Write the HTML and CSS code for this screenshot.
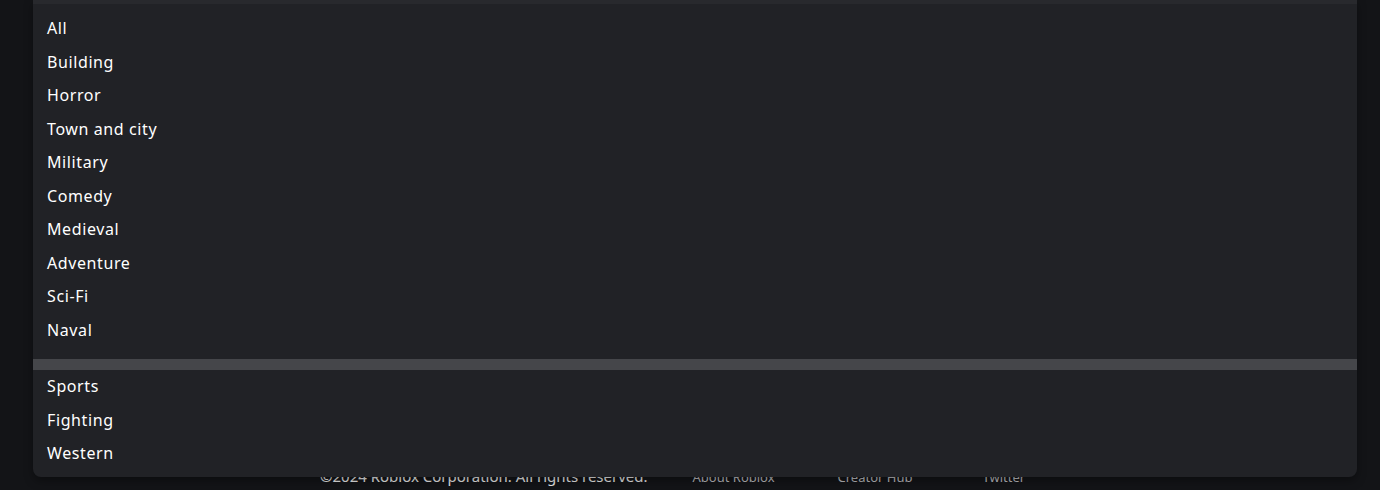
FILE: index.html
```html
<!DOCTYPE html>
<html lang="en">
<head>
    <meta charset="UTF-8">
    <meta name="viewport" content="width=device-width, initial-scale=1.0">
    <title>Genre filter</title>
    <link rel="stylesheet" href="styles.css">
</head>
<body>
    <div class="page">
        <!-- footer sits behind the open dropdown -->
        <footer class="footer">
            <span class="copyright">©2024 Roblox Corporation. All rights reserved.</span>
            <a href="#" class="footer-link">About Roblox</a>
            <a href="#" class="footer-link">Creator Hub</a>
            <a href="#" class="footer-link">Twitter</a>
        </footer>

        <!-- genre dropdown -->
        <div class="dropdown">
            <div class="dropdown-top"></div>
            <ul class="genre-list">
                <li>All</li>
                <li>Building</li>
                <li>Horror</li>
                <li>Town and city</li>
                <li>Military</li>
                <li>Comedy</li>
                <li>Medieval</li>
                <li>Adventure</li>
                <li>Sci-Fi</li>
                <li>Naval</li>
            </ul>
            <div class="divider"></div>
            <ul class="genre-list more">
                <li>Sports</li>
                <li>Fighting</li>
                <li>Western</li>
            </ul>
        </div>
    </div>
</body>
</html>
```

FILE: styles.css
```css
body {
    margin: 0;
    background: #131417;
    font-family: "Noto Sans", "Liberation Sans", sans-serif;
    color: #fff;
    overflow: hidden;
}

.page {
    position: relative;
    height: 490px;
}

.footer {
    display: flex;
    align-items: baseline;
    padding-top: 466px;
    padding-left: 320px;
}

.copyright {
    font-size: 15px;
    color: #e8e8e8;
    margin-right: 45px;
}

.footer-link {
    font-size: 13px;
    color: #b8b8bc;
    text-decoration: none;
    width: 145px;
}

.dropdown {
    position: absolute;
    top: 0;
    left: 33px;
    width: 1324px;
    height: 477px;
    background: #212226;
    border-radius: 0 0 8px 8px;
    box-shadow: 0 4px 10px rgba(0, 0, 0, 0.35);
    display: flex;
    flex-direction: column;
}

.dropdown-top {
    height: 4px;
    background: #28292d;
}

.genre-list {
    list-style: none;
    margin: 0;
    padding: 8px 0 0;
}

.genre-list li {
    height: 33.5px;
    line-height: 33.5px;
    padding-left: 14px;
    font-size: 16px;
    letter-spacing: 0.6px;
}

.divider {
    margin-top: 12px;
    height: 11px;
    background: #45464a;
}

.genre-list.more {
    padding-top: 0;
}
```
